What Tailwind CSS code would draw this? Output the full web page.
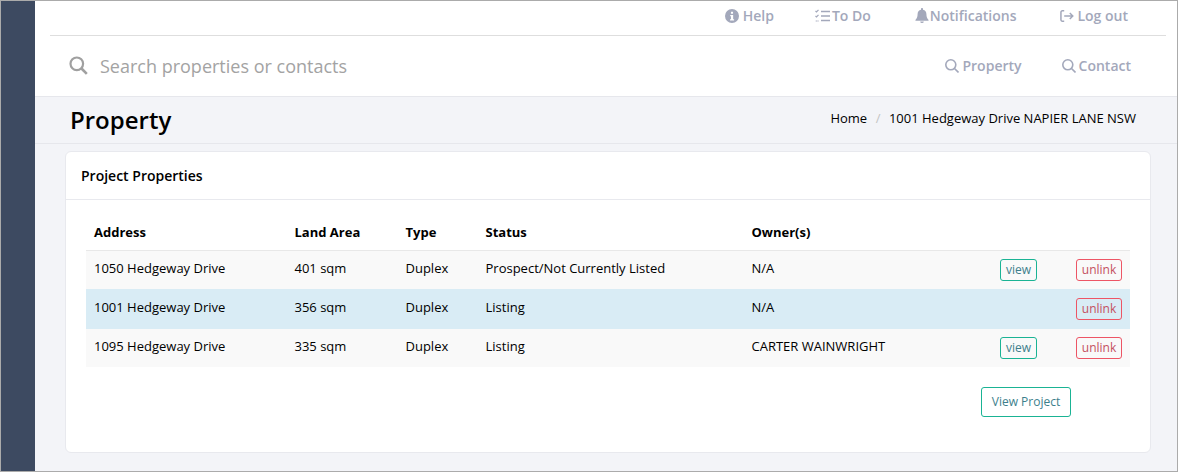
<!DOCTYPE html>
<html lang="en">
<head>
    <meta charset="UTF-8">
    <title>Property</title>
    <script src="https://cdn.jsdelivr.net/npm/@tailwindcss/browser@4"></script>
</head>
<body class="font-['Open_Sans',sans-serif] text-black bg-white overflow-hidden">
<div class="w-[1178px] h-[472px] border border-[#ababab] flex overflow-hidden">
    <!-- Sidebar -->
    <div class="w-[34px] shrink-0 bg-[#3d4a61]"></div>

    <div class="flex-1 flex flex-col min-w-0">
        <!-- Top links -->
        <div class="h-[35px] shrink-0 ml-[15px] mr-[11px] border-b border-[#dedede] flex justify-end items-center pr-[38px] pb-[5px] text-sm font-semibold text-[#a3a8bb]">
            <a class="flex items-center gap-[4px]">
                <svg class="w-[14px] h-[14px]" viewBox="0 0 24 24" fill="currentColor"><path fill-rule="evenodd" d="M12 0a12 12 0 1 0 0 24 12 12 0 0 0 0-24zm-1.8 4.6h3.6v3.6h-3.6zM9 10.200h5v7.200h1.600v2.200H8.600v-2.200h1.600v-5H9z"/></svg>
                Help
            </a>
            <a class="flex items-center gap-[2px] ml-[41px]">
                <svg class="w-[15px] h-[14px]" viewBox="0 0 15 14" fill="none" stroke="currentColor"><path d="M.5 2l1 1 2-2.200M.5 7l1 1 2-2.200" stroke-width="1.200"/><path d="M.8 12h.8M2.600 12h.8" stroke-width="1.500"/><path d="M6 2.500h9M6 7h9M6 11.500h9" stroke-width="1.500"/></svg>
                To Do
            </a>
            <a class="flex items-center gap-[1px] ml-[44px]">
                <svg class="w-[14px] h-[15px]" viewBox="0 0 14 15" fill="currentColor"><path d="M7 0c-.6 0-1 .4-1 1v.7C3.800 2.200 2.600 4 2.600 6c0 3-.8 4.500-2 5.700-.4.400-.2 1.100.5 1.100h11.800c.7 0 .9-.7.500-1.100-1.200-1.200-2-2.700-2-5.700 0-2-1.200-3.800-3.400-4.300V1c0-.6-.4-1-1-1zM5.200 13.400a1.800 1.600 0 0 0 3.600 0z"/></svg>
                Notifications
            </a>
            <a class="flex items-center gap-[3px] ml-[44px]">
                <svg class="w-[14px] h-[14px]" viewBox="0 0 15 14" fill="none" stroke="currentColor" stroke-width="1.600"><path d="M4.500 1.500H2.500a1.500 1.500 0 0 0-1.500 1.500v8a1.500 1.500 0 0 0 1.500 1.500h2"/><path d="M4.500 7h9M10.500 3.800 13.700 7l-3.200 3.200"/></svg>
                Log out
            </a>
        </div>

        <!-- Search row -->
        <div class="h-[61px] shrink-0 flex items-center pl-[34px] pr-[46px] pb-[1px] border-b border-[#e6e7ec]">
            <svg class="w-[19px] h-[19px] text-[#a0a0a0]" viewBox="0 0 19 19" fill="none" stroke="currentColor"><circle cx="7.800" cy="7.800" r="6.300" stroke-width="2.200"/><path d="M12.500 12.500l5.300 5.300" stroke-width="2.600"/></svg>
            <span class="ml-[12px] text-lg leading-none text-[#a3a3a3]">Search properties or contacts</span>
            <div class="ml-auto flex items-center text-sm font-semibold text-[#a3a8bb]">
                <a class="flex items-center gap-[3px]">
                    <svg class="w-[14px] h-[14px]" viewBox="0 0 14 14" fill="none" stroke="currentColor" stroke-width="1.600"><circle cx="5.800" cy="5.800" r="5"/><path d="M9.500 9.500l4 4"/></svg>
                    Property
                </a>
                <a class="flex items-center gap-[3px] ml-[40px]">
                    <svg class="w-[14px] h-[14px]" viewBox="0 0 14 14" fill="none" stroke="currentColor" stroke-width="1.600"><circle cx="5.800" cy="5.800" r="5"/><path d="M9.500 9.500l4 4"/></svg>
                    Contact
                </a>
            </div>
        </div>

        <!-- Page body -->
        <div class="flex-1 bg-[#f3f4f8] min-h-0">
            <div class="h-[47px] flex items-center justify-between pl-[35px] pr-[41px] border-b border-[#e6e7ec]">
                <h1 class="text-2xl font-semibold leading-none">Property</h1>
                <div class="flex items-center text-[13px] pb-[3px]">
                    <span>Home</span>
                    <span class="mx-[8.500px] text-[#c4c4c4]">/</span>
                    <span>1001 Hedgeway Drive NAPIER LANE NSW</span>
                </div>
            </div>

            <!-- Card -->
            <div class="ml-[30px] mr-[26px] mt-[7px] h-[302px] bg-white rounded-md border border-[#e8e9ee]">
                <div class="h-[48px] flex items-center px-[15px] border-b border-[#e8e9ee] text-sm font-semibold">Project Properties</div>
                <div class="pt-[14px] pl-[20px] pr-[20px]">
                    <table class="w-[1044px] table-fixed border-collapse text-[13px]">
                        <colgroup>
                            <col class="w-[201px]"><col class="w-[111px]"><col class="w-[80px]"><col class="w-[266px]"><col class="w-[230px]"><col class="w-[76px]"><col class="w-[80px]">
                        </colgroup>
                        <thead>
                            <tr class="h-[36px] border-b border-[#e8e8e8] text-left font-bold">
                                <th class="px-[8px] pt-[2px] font-bold">Address</th>
                                <th class="pl-[7.500px] pt-[2px] font-bold">Land Area</th>
                                <th class="pl-[7.500px] pt-[2px] font-bold">Type</th>
                                <th class="pl-[7.500px] pt-[2px] font-bold">Status</th>
                                <th class="pl-[7.500px] pt-[2px] font-bold">Owner(s)</th>
                                <th></th>
                                <th></th>
                            </tr>
                        </thead>
                        <tbody>
                            <tr class="h-[39px] bg-[#f9f9f9]">
                                <td class="px-[8px] pb-[2px]">1050 Hedgeway Drive</td>
                                <td class="pl-[7.500px] pb-[2px]">401 sqm</td>
                                <td class="pl-[7.500px] pb-[2px]">Duplex</td>
                                <td class="pl-[7.500px] pb-[2px]">Prospect/Not Currently Listed</td>
                                <td class="pl-[7.500px] pb-[2px]">N/A</td>
                                <td class="pl-[26px]"><span class="flex w-[37px] h-[22px] items-center justify-center rounded-[3px] border border-[#1ab394] text-xs text-[#3d7f8c]">view</span></td>
                                <td class="pl-[26px]"><span class="flex w-[46px] h-[22px] items-center justify-center rounded-[3px] border border-[#ed5565] text-xs text-[#c4505f]">unlink</span></td>
                            </tr>
                            <tr class="h-[40px] bg-[#d9ecf5]">
                                <td class="px-[8px] pb-[3px]">1001 Hedgeway Drive</td>
                                <td class="pl-[7.500px] pb-[3px]">356 sqm</td>
                                <td class="pl-[7.500px] pb-[3px]">Duplex</td>
                                <td class="pl-[7.500px] pb-[3px]">Listing</td>
                                <td class="pl-[7.500px] pb-[3px]">N/A</td>
                                <td></td>
                                <td class="pl-[26px] pb-[1px]"><span class="flex w-[46px] h-[22px] items-center justify-center rounded-[3px] border border-[#ed5565] text-xs text-[#c4505f]">unlink</span></td>
                            </tr>
                            <tr class="h-[38px] bg-[#f9f9f9]">
                                <td class="px-[8px] pb-[2px]">1095 Hedgeway Drive</td>
                                <td class="pl-[7.500px] pb-[2px]">335 sqm</td>
                                <td class="pl-[7.500px] pb-[2px]">Duplex</td>
                                <td class="pl-[7.500px] pb-[2px]">Listing</td>
                                <td class="pl-[7.500px] pb-[2px]">CARTER WAINWRIGHT</td>
                                <td class="pl-[26px]"><span class="flex w-[37px] h-[22px] items-center justify-center rounded-[3px] border border-[#1ab394] text-xs text-[#3d7f8c]">view</span></td>
                                <td class="pl-[26px]"><span class="flex w-[46px] h-[22px] items-center justify-center rounded-[3px] border border-[#ed5565] text-xs text-[#c4505f]">unlink</span></td>
                            </tr>
                        </tbody>
                    </table>
                    <div class="flex justify-end mt-[20px] pr-[59px]">
                        <span class="flex w-[90px] h-[30px] items-center justify-center rounded-[3px] border border-[#1ab394] text-xs text-[#3d7f8c]">View Project</span>
                    </div>
                </div>
            </div>
        </div>
    </div>
</div>
</body>
</html>
